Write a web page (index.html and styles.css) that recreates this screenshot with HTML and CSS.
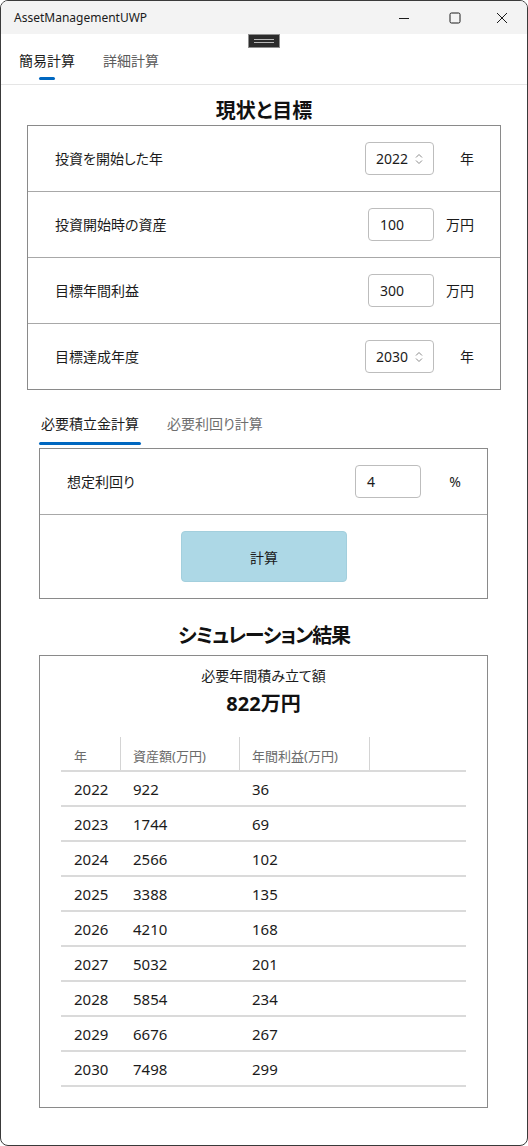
FILE: index.html
```html
<!DOCTYPE html>
<html lang="ja">
<head>
<meta charset="utf-8">
<title>AssetManagementUWP</title>
<link rel="stylesheet" href="styles.css">
</head>
<body>
<div class="window">
  <header class="titlebar">
    <span class="app-title">AssetManagementUWP</span>
    <div class="caption">
      <span class="cap-btn"><svg viewBox="0 0 12 12"><line x1="1" y1="6.5" x2="11" y2="6.5"/></svg></span>
      <span class="cap-btn"><svg viewBox="0 0 12 12"><rect x="1" y="1" width="10" height="10" rx="1.5"/></svg></span>
      <span class="cap-btn"><svg viewBox="0 0 12 12"><path d="M1 1 L11 11 M11 1 L1 11"/></svg></span>
    </div>
  </header>
  <div class="drag-handle"><span></span><span></span></div>
  <nav class="tabs">
    <div class="tab active"><span class="tab-label">簡易計算</span><span class="indicator"></span></div>
    <div class="tab"><span class="tab-label">詳細計算</span></div>
  </nav>
  <main class="content">
    <h2 class="section-title">現状と目標</h2>
    <div class="panel panel-wide">
      <div class="row">
        <span class="label">投資を開始した年</span>
        <div class="field spinner"><span>2022</span><svg class="chev" viewBox="0 0 8 12"><path d="M1 4.5 L4 1.5 L7 4.5 M1 7.5 L4 10.5 L7 7.5"/></svg></div>
        <span class="unit">年</span>
      </div>
      <div class="row">
        <span class="label">投資開始時の資産</span>
        <div class="field textbox"><span>100</span></div>
        <span class="unit">万円</span>
      </div>
      <div class="row">
        <span class="label">目標年間利益</span>
        <div class="field textbox"><span>300</span></div>
        <span class="unit">万円</span>
      </div>
      <div class="row">
        <span class="label">目標達成年度</span>
        <div class="field spinner"><span>2030</span><svg class="chev" viewBox="0 0 8 12"><path d="M1 4.5 L4 1.5 L7 4.5 M1 7.5 L4 10.5 L7 7.5"/></svg></div>
        <span class="unit">年</span>
      </div>
    </div>

    <div class="subtabs">
      <div class="subtab active"><span class="subtab-label">必要積立金計算</span><span class="bar"></span></div>
      <div class="subtab"><span class="subtab-label">必要利回り計算</span><span class="bar"></span></div>
    </div>

    <div class="panel panel-narrow">
      <div class="row">
        <span class="label">想定利回り</span>
        <div class="field textbox"><span>4</span></div>
        <span class="unit">%</span>
      </div>
      <div class="row row-button">
        <button class="calc-btn" type="button">計算</button>
      </div>
    </div>

    <h2 class="section-title second">シミュレーション結果</h2>
    <div class="panel panel-narrow result">
      <div class="result-caption">必要年間積み立て額</div>
      <div class="result-value">822万円</div>
      <div class="grid">
        <div class="grid-row grid-head">
          <span class="cell">年</span><span class="cell">資産額(万円)</span><span class="cell">年間利益(万円)</span><span class="cell last"></span>
        </div>
        <div class="grid-row"><span class="cell">2022</span><span class="cell">922</span><span class="cell">36</span><span class="cell"></span></div>
        <div class="grid-row"><span class="cell">2023</span><span class="cell">1744</span><span class="cell">69</span><span class="cell"></span></div>
        <div class="grid-row"><span class="cell">2024</span><span class="cell">2566</span><span class="cell">102</span><span class="cell"></span></div>
        <div class="grid-row"><span class="cell">2025</span><span class="cell">3388</span><span class="cell">135</span><span class="cell"></span></div>
        <div class="grid-row"><span class="cell">2026</span><span class="cell">4210</span><span class="cell">168</span><span class="cell"></span></div>
        <div class="grid-row"><span class="cell">2027</span><span class="cell">5032</span><span class="cell">201</span><span class="cell"></span></div>
        <div class="grid-row"><span class="cell">2028</span><span class="cell">5854</span><span class="cell">234</span><span class="cell"></span></div>
        <div class="grid-row"><span class="cell">2029</span><span class="cell">6676</span><span class="cell">267</span><span class="cell"></span></div>
        <div class="grid-row"><span class="cell">2030</span><span class="cell">7498</span><span class="cell">299</span><span class="cell"></span></div>
      </div>
    </div>
  </main>
</div>
</body>
</html>
```

FILE: styles.css
```css
* { box-sizing: border-box; }

body {
  margin: 0;
  background: #ffffff;
  font-family: "Noto Sans", "Noto Sans CJK JP", sans-serif;
  font-feature-settings: "palt";
  color: #1b1b1b;
}

.window {
  position: relative;
  width: 528px;
  height: 1146px;
  border: 1px solid #3a3a3a;
  border-radius: 8px;
  overflow: hidden;
  background: #ffffff;
}

/* title bar */
.titlebar {
  height: 33px;
  background: #f3f3f3;
  display: flex;
  align-items: center;
  padding-left: 13px;
}
.app-title {
  font-size: 12px;
  line-height: 16px;
  color: #1b1b1b;
}
.caption {
  margin-left: auto;
  margin-right: 2px;
  display: flex;
}
.cap-btn {
  width: 47px;
  height: 33px;
  display: flex;
  align-items: center;
  justify-content: center;
}
.cap-btn:first-child { justify-content: flex-start; padding-left: 14px; }
.cap-btn svg {
  width: 12px;
  height: 12px;
  fill: none;
  stroke: #1b1b1b;
  stroke-width: 1;
}

.drag-handle {
  position: absolute;
  left: 247px;
  top: 33px;
  width: 32px;
  height: 14px;
  background: #2b2b2b;
  border: 1px solid #8f8f8f;
  display: flex;
  flex-direction: column;
  justify-content: center;
  gap: 2px;
  padding: 0 5px;
}
.drag-handle span {
  height: 1px;
  background: #b8b8b8;
}

/* top tabs */
.tabs {
  display: flex;
  gap: 28px;
  padding-left: 18px;
  height: 51px;
  border-bottom: 1px solid #e5e5e5;
}
.tab {
  display: flex;
  flex-direction: column;
  align-items: center;
  padding-top: 17px;
}
.tab-label {
  font-size: 14px;
  line-height: 20px;
  color: #5c5c5c;
}
.tab.active .tab-label { color: #1b1b1b; }
.indicator {
  width: 16px;
  height: 3px;
  border-radius: 2px;
  background: #0067c0;
  margin-top: 6px;
}

/* sections */
.section-title {
  margin: 12px 0 0;
  text-align: center;
  font-size: 20px;
  line-height: 28px;
  font-weight: 700;
  color: #111111;
}
.section-title.second {
  margin: 23px 0 5px;
  letter-spacing: -1.2px;
}

.panel {
  border: 1px solid #8a8a8a;
}
.panel-wide { margin: 0 26px; }
.panel-narrow { margin: 0 39px 0 38px; }

.row {
  display: flex;
  align-items: center;
  height: 66px;
  padding: 0 26px 0 27px;
  border-bottom: 1px solid #a8a8a8;
}
.row:last-child {
  border-bottom: none;
  height: 65px;
}
.label {
  flex: 1;
  font-size: 14px;
  line-height: 20px;
}
.field {
  flex-shrink: 0;
  height: 33px;
  border: 1px solid #bdbdbd;
  border-radius: 4px;
  display: flex;
  align-items: center;
  font-size: 14px;
  line-height: 20px;
  margin-right: 12px;
  background: #ffffff;
}
.textbox {
  width: 66px;
  padding-left: 11px;
}
.spinner {
  width: 69px;
  padding: 0 10px 0 10px;
  justify-content: space-between;
}
.chev {
  width: 8px;
  height: 12px;
  fill: none;
  stroke: #8a8a8a;
  stroke-width: 1;
}
.unit {
  flex-shrink: 0;
  width: 28px;
  white-space: nowrap;
  text-align: right;
  font-size: 14px;
  line-height: 20px;
}

/* sub tabs */
.subtabs {
  display: flex;
  gap: 24px;
  margin: 0 38px 3px;
}
.subtab {
  display: flex;
  flex-direction: column;
  padding-top: 24px;
}
.subtab-label {
  font-size: 14px;
  line-height: 20px;
  padding: 0 2px;
  color: #6e6e6e;
}
.subtab.active .subtab-label { color: #1b1b1b; }
.subtab .bar {
  height: 3px;
  margin-top: 8px;
  border-radius: 2px;
}
.subtab.active .bar { background: #0067c0; }

.row-button {
  justify-content: center;
}
.row-button:last-child { height: 83px; }
.calc-btn {
  width: 166px;
  height: 51px;
  background: #add8e6;
  border: 1px solid #a3cfdd;
  border-radius: 4px;
  font-family: inherit;
  font-feature-settings: "palt";
  font-size: 14px;
  color: #1b1b1b;
  padding: 0;
}

/* results */
.result {
  padding: 10px 21px 20px;
}
.result-caption {
  text-align: center;
  font-size: 14px;
  line-height: 20px;
}
.result-value {
  text-align: center;
  font-size: 20px;
  line-height: 28px;
  font-weight: 700;
  margin-top: 4px;
  color: #111111;
}
.grid {
  margin-top: 19px;
}
.grid-row {
  display: grid;
  grid-template-columns: 60px 119px 130px 1fr;
  height: 35px;
  border-bottom: 2px solid #dadada;
}
.cell {
  display: flex;
  align-items: center;
  padding-left: 12px;
  font-size: 15px;
  color: #1b1b1b;
}
.cell:first-child { padding-left: 13px; }
.grid-head .cell {
  font-size: 13px;
  color: #6b6b6b;
  padding-top: 4px;
  border-right: 1px solid #d4d4d4;
}
.grid-head .cell.last { border-right: none; }
```
